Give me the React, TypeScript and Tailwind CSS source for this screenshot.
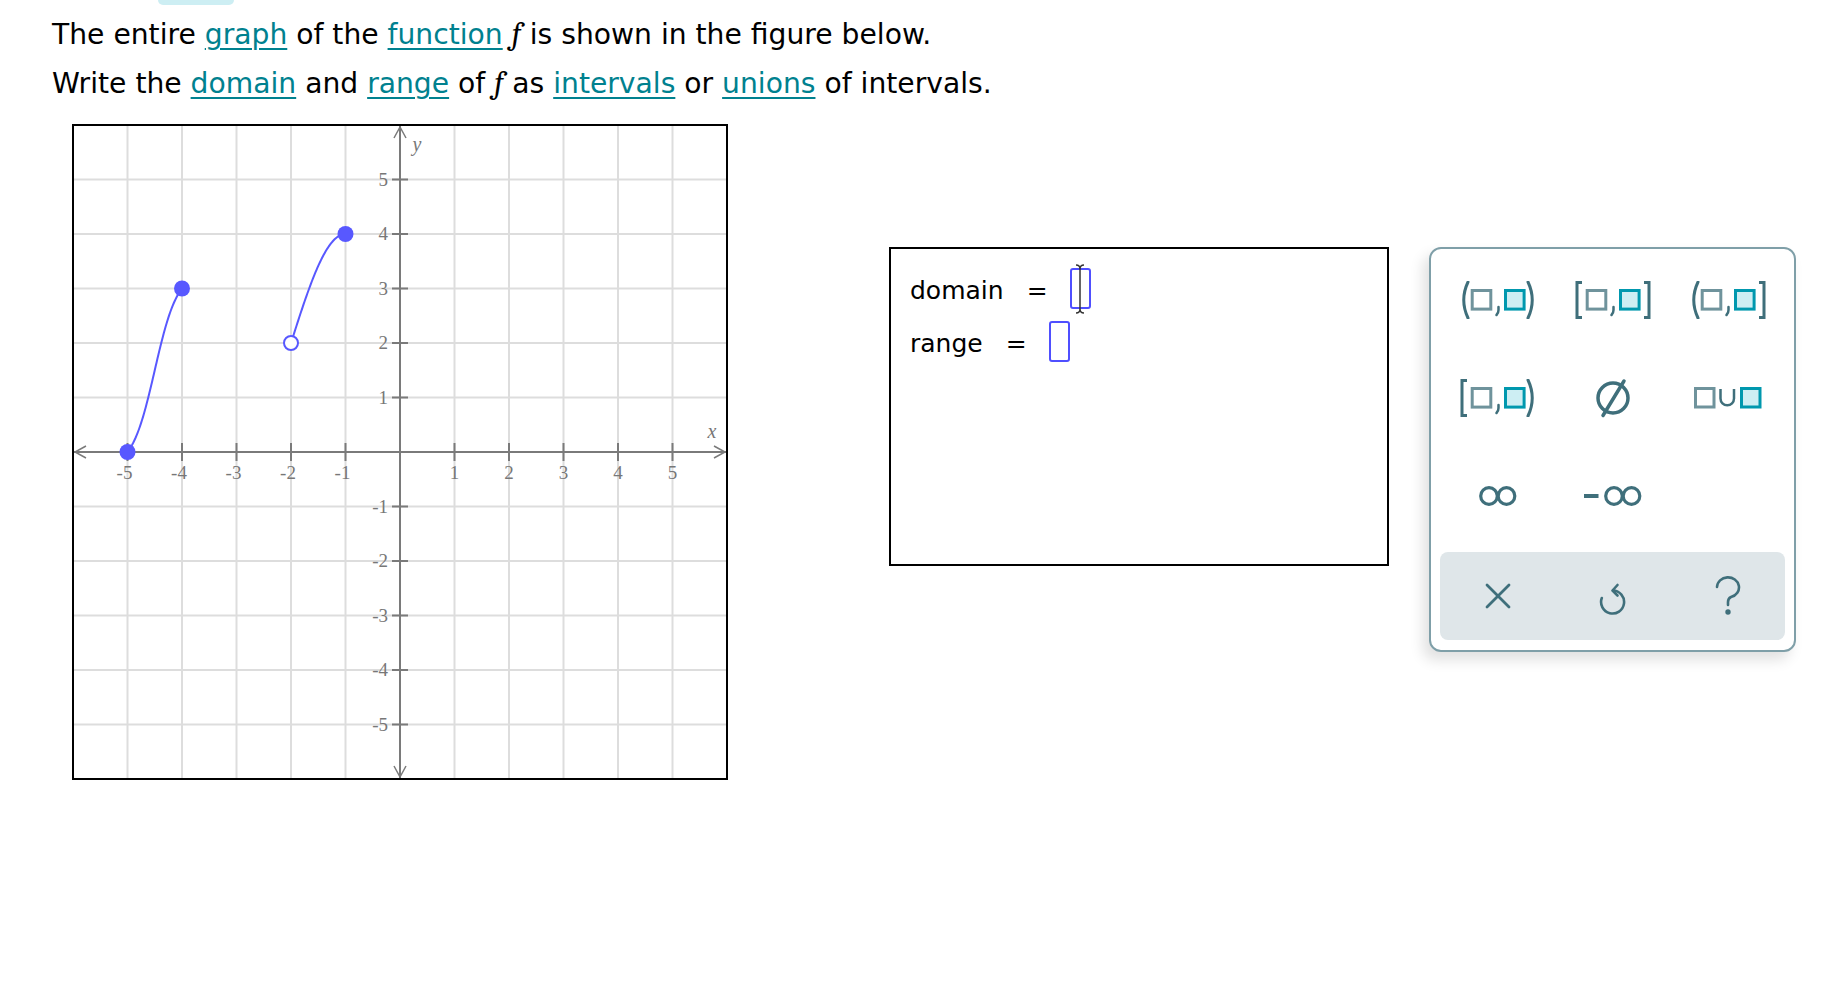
import React from "react";

const DARK = "#3f6f7b";
const GRAY = "#6f939c";
const TEAL = "#0098ae";
const TEAL_FILL = "#cdeef3";
const BLUE = "#5858ff";

// graph geometry: 12 units across, origin in the middle
const U = 54.5;
const O = 328;
const px = (x: number) => O + x * U;
const py = (y: number) => O - y * U;

function curve(f: (x: number) => number, x0: number, x1: number, n = 60) {
  let d = "";
  for (let i = 0; i <= n; i++) {
    const x = x0 + ((x1 - x0) * i) / n;
    d += `${i === 0 ? "M" : "L"}${px(x).toFixed(2)} ${py(f(x)).toFixed(2)} `;
  }
  return d;
}

const ticks = [-5, -4, -3, -2, -1, 1, 2, 3, 4, 5];

function Graph() {
  const seg1 = curve((x) => 1.5 + (1.5 * Math.tanh(2.4 * (x + 4.5))) / Math.tanh(1.2), -5, -4);
  const seg2 = curve((x) => 2 + 2 * Math.sin((Math.PI / 2) * (x + 2)), -2, -1);

  return (
    <svg width={656} height={656} className="shrink-0 block">
      <rect x={1} y={1} width={654} height={654} fill="white" />
      {ticks.map((i) => (
        <g key={i} stroke="#dddddd" strokeWidth={2}>
          <line x1={px(i)} y1={2} x2={px(i)} y2={654} />
          <line x1={2} y1={py(i)} x2={654} y2={py(i)} />
        </g>
      ))}

      <g stroke="#7a7a7a" strokeWidth={2} fill="none">
        <line x1={2} y1={O} x2={654} y2={O} />
        <line x1={O} y1={2} x2={O} y2={654} />
        {ticks.map((i) => (
          <g key={i}>
            <line x1={px(i)} y1={O - 9} x2={px(i)} y2={O + 9} />
            <line x1={O - 8} y1={py(i)} x2={O + 8} y2={py(i)} />
          </g>
        ))}
      </g>
      <g stroke="#7a7a7a" strokeWidth={1.5} fill="none">
        <path d={`M14 ${O - 6} L3 ${O} L14 ${O + 6}`} />
        <path d={`M642 ${O - 6} L653 ${O} L642 ${O + 6}`} />
        <path d={`M${O - 6} 14 L${O} 3 L${O + 6} 14`} />
        <path d={`M${O - 6} 642 L${O} 653 L${O + 6} 642`} />
      </g>

      <g fill="#777777" fontFamily="'Liberation Serif', serif" fontSize={19}>
        {ticks.map((i) => (
          <text key={`x${i}`} x={px(i) - (i < 0 ? 3 : 0)} y={O + 27} textAnchor="middle">
            {i}
          </text>
        ))}
        {ticks.map((i) => (
          <text key={`y${i}`} x={O - 12} y={py(i) + 6} textAnchor="end">
            {i}
          </text>
        ))}
        <text x={640} y={314} textAnchor="middle" fontStyle="italic" fontSize={20}>
          x
        </text>
        <text x={345} y={27} textAnchor="middle" fontStyle="italic" fontSize={20}>
          y
        </text>
      </g>

      <g stroke={BLUE} strokeWidth={2} fill="none">
        <path d={seg1} />
        <path d={seg2} />
        <circle cx={px(-2)} cy={py(2)} r={7} fill="white" />
      </g>
      <g fill={BLUE}>
        <circle cx={px(-5)} cy={py(0)} r={8} />
        <circle cx={px(-4)} cy={py(3)} r={8} />
        <circle cx={px(-1)} cy={py(4)} r={8} />
      </g>

      <rect x={1} y={1} width={654} height={654} fill="none" stroke="black" strokeWidth={2} />
    </svg>
  );
}

function Interval({ left, right }: { left: "(" | "["; right: ")" | "]" }) {
  return (
    <svg width={78} height={38} viewBox="0 0 78 38" fill="none">
      <path
        d={left === "(" ? "M9 1 Q0.5 19 9 37" : "M8 1.5 H3 V36.5 H8"}
        stroke={DARK}
        strokeWidth={3}
        strokeLinecap={left === "(" ? "round" : "butt"}
      />
      <rect x={13.2} y={9.5} width={18.6} height={18.6} stroke={GRAY} strokeWidth={3} fill="white" />
      <path d="M39.5 26 V29 Q39.5 32 37.5 34" stroke={DARK} strokeWidth={2.5} strokeLinecap="round" />
      <rect x={46.5} y={9.5} width={18.6} height={18.6} stroke={TEAL} strokeWidth={3} fill={TEAL_FILL} />
      <path
        d={right === ")" ? "M69 1 Q77.5 19 69 37" : "M70 1.5 H75 V36.5 H70"}
        stroke={DARK}
        strokeWidth={3}
        strokeLinecap={right === ")" ? "round" : "butt"}
      />
    </svg>
  );
}

function EmptySet() {
  return (
    <svg width={40} height={42} viewBox="0 0 40 42" fill="none" stroke={DARK} strokeWidth={3.5} strokeLinecap="round">
      <circle cx={20} cy={21} r={15} />
      <line x1={10} y1={38.5} x2={31} y2={4} />
    </svg>
  );
}

function Union() {
  return (
    <svg width={68} height={24} viewBox="0 0 68 24" fill="none">
      <rect x={1.5} y={2.5} width={18.5} height={18.5} stroke={GRAY} strokeWidth={3} fill="white" />
      <path d="M26.5 3 V12.5 A6.75 6.75 0 0 0 40 12.5 V3" stroke={DARK} strokeWidth={2.5} />
      <rect x={47.5} y={2.5} width={18.5} height={18.5} stroke={TEAL} strokeWidth={3} fill={TEAL_FILL} />
    </svg>
  );
}

function Infinity({ minus = false }: { minus?: boolean }) {
  const off = minus ? 20 : 0;
  return (
    <svg width={38 + off} height={22} viewBox={`0 0 ${38 + off} 22`} fill="none" stroke={DARK} strokeWidth={3.2}>
      {minus && <rect x={0} y={9} width={14.5} height={4} fill={DARK} stroke="none" />}
      <circle cx={off + 10} cy={11} r={8.3} />
      <circle cx={off + 27.5} cy={11} r={8.3} />
    </svg>
  );
}

function Keypad() {
  const cell = "h-[98px] flex items-center justify-center";
  return (
    <div className="ml-[40px] mt-[123px] w-[367px] shrink-0 rounded-[12px] border-2 border-[#7f9fa8] bg-white px-[9px] pt-[2px] pb-[10px] shadow-[-6px_8px_14px_rgba(0,0,0,0.12)]">
      <div className="grid grid-cols-3">
        <div className={cell}>
          <Interval left="(" right=")" />
        </div>
        <div className={cell}>
          <Interval left="[" right="]" />
        </div>
        <div className={cell}>
          <Interval left="(" right="]" />
        </div>
        <div className={cell}>
          <Interval left="[" right=")" />
        </div>
        <div className={cell}>
          <EmptySet />
        </div>
        <div className={cell}>
          <Union />
        </div>
        <div className={cell}>
          <Infinity />
        </div>
        <div className={cell}>
          <Infinity minus />
        </div>
        <div className={cell} />
      </div>
      <div className="mt-[7px] grid h-[88px] grid-cols-3 rounded-[8px] bg-[#dfe6e9]">
        <div className="flex items-center justify-center">
          <svg width={28} height={28} viewBox="0 0 28 28" stroke={DARK} strokeWidth={2.8} strokeLinecap="round">
            <line x1={3} y1={3} x2={25} y2={25} />
            <line x1={25} y1={3} x2={3} y2={25} />
          </svg>
        </div>
        <div className="flex items-center justify-center">
          <svg width={30} height={38} viewBox="0 0 30 38" fill="none" stroke={DARK} strokeWidth={2.6} strokeLinecap="round" strokeLinejoin="round">
            <path d="M3.8 21 A11.5 11.5 0 1 0 15 13.5" />
            <path d="M19.5 8 L14.5 13.5 L19.5 18.5" />
          </svg>
        </div>
        <div className="flex items-center justify-center">
          <svg width={28} height={40} viewBox="0 0 28 40" fill="none" stroke={DARK} strokeWidth={2.6} strokeLinecap="round">
            <path d="M3 11 A11 10 0 1 1 17 21 Q14 22.5 14 26 V29" />
            <circle cx={14} cy={36} r={1.4} fill={DARK} />
          </svg>
        </div>
      </div>
    </div>
  );
}

function AnswerBox() {
  const label = "pt-[4px] text-[25px] leading-none text-black";
  const slot = "relative w-[21px] h-[41px] rounded-[3px] border-2 border-[#4f4fff] shrink-0";
  return (
    <div className="ml-[161px] mt-[123px] h-[319px] w-[500px] shrink-0 border-2 border-black pl-[19px] pt-[19px]">
      <div className="flex h-[41px] items-center">
        <span className={label}>domain</span>
        <span className={`${label} ml-[23px] text-[#222]`}>=</span>
        <span className={`${slot} ml-[22px]`}>
          <svg width={14} height={52} viewBox="0 0 14 52" className="absolute left-[1px] top-[-7px]" fill="none" stroke="#333" strokeWidth={1.5}>
            <path d="M3 2 Q7 2 7 6 Q7 2 11 2" />
            <line x1={7} y1={6} x2={7} y2={46} />
            <path d="M3 50 Q7 50 7 46 Q7 50 11 50" />
          </svg>
        </span>
      </div>
      <div className="mt-[12px] flex h-[41px] items-center">
        <span className={label}>range</span>
        <span className={`${label} ml-[23px] text-[#222]`}>=</span>
        <span className={`${slot} ml-[22px]`} />
      </div>
    </div>
  );
}

function Link({ children }: { children: React.ReactNode }) {
  return (
    <a className="cursor-pointer text-[#00818f] underline decoration-[2px] underline-offset-[4px]">{children}</a>
  );
}

function F() {
  return (
    <i className="font-serif [font-family:'Liberation_Serif','Times_New_Roman',serif] text-[32px] italic">f</i>
  );
}

export default function App() {
  return (
    <div className="min-h-screen bg-white [font-family:'DejaVu_Sans',sans-serif]">
      <div className="ml-[158px] h-[5px] w-[76px] rounded-b-[14px] bg-[#cdeef3]" />
      <div className="pl-[52px] pt-[5px] text-[28.2px] leading-[48px] text-black">
        <div>
          The entire <Link>graph</Link> of the <Link>function</Link> <F /> is shown in the figure below.
        </div>
        <div>
          Write the <Link>domain</Link> and <Link>range</Link> of <F /> as <Link>intervals</Link> or{" "}
          <Link>unions</Link> of intervals.
        </div>
      </div>
      <div className="mt-[16px] flex items-start pl-[72px]">
        <Graph />
        <AnswerBox />
        <Keypad />
      </div>
    </div>
  );
}
